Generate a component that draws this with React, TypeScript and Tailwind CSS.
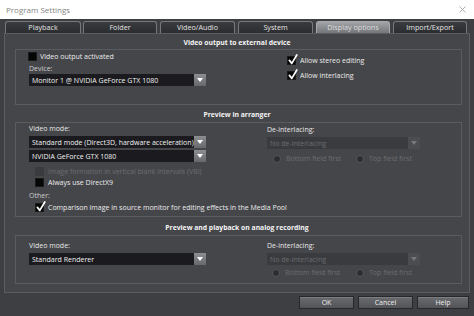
import React from "react";

function Check({ checked = false, disabled = false }: { checked?: boolean; disabled?: boolean }) {
  return (
    <div
      className={
        "relative w-[9px] h-[9px] shrink-0 border " +
        (disabled ? "bg-[#3a3b3f] border-[#3a3b3f]" : "bg-[#060606] border-[#1a1a1a]")
      }
    >
      {checked && (
        <svg className="absolute left-[0px] top-[-3px]" width="10" height="11" viewBox="0 0 10 11">
          <path d="M1.4 6.4 L3.8 9.4 L8.8 1.0" fill="none" stroke="#ffffff" strokeWidth="1.7" strokeLinecap="round" strokeLinejoin="round" />
        </svg>
      )}
    </div>
  );
}

function Arrow({ disabled = false }: { disabled?: boolean }) {
  return (
    <div
      className={
        "w-[12px] h-full flex items-center justify-center " +
        (disabled ? "bg-[#4c4d51]" : "bg-gradient-to-b from-[#8d8e92] to-[#67686c]")
      }
    >
      <svg width="6" height="4" viewBox="0 0 6 4">
        <path d="M0 0 L6 0 L3 4 Z" fill={disabled ? "#77787c" : "#ffffff"} />
      </svg>
    </div>
  );
}

function Select({ text, disabled = false, wide = false }: { text: string; disabled?: boolean; wide?: boolean }) {
  return (
    <div
      className={
        "flex items-stretch h-[12px] " +
        (wide ? "w-[153px] " : "w-[177px] ") +
        (disabled ? "bg-[#3a3b3f]" : "bg-[#1b1b1f]")
      }
    >
      <div
        className={
          "flex-1 flex items-center pl-[3px] text-[7px] leading-none whitespace-nowrap " +
          (disabled ? "text-[#6c6d71]" : "text-[#f0f0f0]")
        }
      >
        {text}
      </div>
      <Arrow disabled={disabled} />
    </div>
  );
}

function Radio({ label, w }: { label: string; w: string }) {
  return (
    <div className={"flex items-center h-[9px] gap-[5px] " + w}>
      <div className="w-[8px] h-[8px] rounded-full bg-[#2c2d30] border border-[#55565a] shrink-0" />
      <span className="text-[7px] leading-none text-[#6c6d71] whitespace-nowrap">{label}</span>
    </div>
  );
}

function Label({ children, dim = false }: { children: React.ReactNode; dim?: boolean }) {
  return (
    <div className={"h-[10px] flex items-center text-[7px] leading-none whitespace-nowrap " + (dim ? "text-[#cfcfcf]" : "text-[#e6e6e6]")}>
      {children}
    </div>
  );
}

function CheckRow({ label, checked = false, disabled = false, gap = "gap-[4px]" }: { label: string; checked?: boolean; disabled?: boolean; gap?: string }) {
  return (
    <div className={"flex items-center h-[9px] " + gap}>
      <Check checked={checked} disabled={disabled} />
      <span className={"text-[7px] leading-none whitespace-nowrap " + (disabled ? "text-[#6c6d71]" : "text-[#ececec]")}>{label}</span>
    </div>
  );
}

function Heading({ children, h, pt }: { children: React.ReactNode; h: string; pt: string }) {
  return (
    <div className={"flex justify-center " + h + " " + pt}>
      <span className="text-[6.8px] leading-[10px] font-bold text-[#f4f4f4] whitespace-nowrap">{children}</span>
    </div>
  );
}

function Tab({ label, w, ml, active = false }: { label: string; w: string; ml: string; active?: boolean }) {
  return (
    <div
      className={
        "h-[12px] rounded-t-[3px] border border-b-0 flex items-center justify-center text-[7.2px] leading-none " +
        w + " " + ml + " " +
        (active
          ? "bg-gradient-to-b from-[#a2a3a7] to-[#75767a] border-[#a8a9ad] text-[#dedede]"
          : "bg-gradient-to-b from-[#3a3b3f] to-[#2c2d30] border-[#76777b] text-[#e4e4e4]")
      }
    >
      {label}
    </div>
  );
}

function Button({ label, w }: { label: string; w: string }) {
  return (
    <div
      className={
        "h-[13px] flex items-center justify-center border border-[#27282b] bg-gradient-to-b from-[#6a6b6f] to-[#535458] shadow-[inset_0_1px_0_#7c7d81] text-[7px] leading-none text-[#ececec] " +
        w
      }
    >
      {label}
    </div>
  );
}

export default function App() {
  return (
    <div className="w-[474px] h-[316px] overflow-hidden font-['Open_Sans','Noto_Sans',sans-serif] bg-[#3e3f43]">
      {/* title bar */}
      <div className="h-[19px] bg-white flex items-center justify-between pl-[6px] pr-[8px]">
        <span className="text-[8px] leading-none text-[#858585]">Program Settings</span>
        <svg width="7" height="7" viewBox="0 0 7 7">
          <path d="M0.5 0.5 L6.5 6.5 M6.5 0.5 L0.5 6.5" stroke="#9a9a9a" strokeWidth="0.8" />
        </svg>
      </div>

      {/* tabs */}
      <div className="flex mt-[2px] h-[12px]">
        <Tab label="Playback" w="w-[76px]" ml="ml-[5px]" />
        <Tab label="Folder" w="w-[74px]" ml="ml-[2px]" />
        <Tab label="Video/Audio" w="w-[75px]" ml="ml-[3px]" />
        <Tab label="System" w="w-[75px]" ml="ml-[3px]" />
        <Tab label="Display options" w="w-[74px]" ml="ml-[3px]" active />
        <Tab label="Import/Export" w="w-[74px]" ml="ml-[3px]" />
      </div>

      {/* panel */}
      <div className="ml-[4px] w-[466px] h-[260px] border border-[#5b5c60] bg-[#45464a] flex flex-col">
        <Heading h="h-[15px]" pt="pt-[4px]">Video output to external device</Heading>

        {/* group 1 */}
        <div className="ml-[10px] w-[447px] h-[56px] border border-[#5a5b5f] flex shrink-0">
          <div className="w-[271px] pl-[12px] flex flex-col">
            <div className="mt-[2px]">
              <CheckRow label="Video output activated" gap="gap-[3px]" />
            </div>
            <div className="mt-[2px] pl-[1px]">
              <Label dim>Device:</Label>
            </div>
            <div className="mt-[1px] pl-[1px]">
              <Select text="Monitor 1 @ NVIDIA GeForce GTX 1080" />
            </div>
          </div>
          <div className="flex flex-col">
            <div className="mt-[6px]">
              <CheckRow label="Allow stereo editing" checked />
            </div>
            <div className="mt-[6px]">
              <CheckRow label="Allow interlacing" checked />
            </div>
          </div>
        </div>

        <Heading h="h-[17px]" pt="pt-[5px]">Preview in arranger</Heading>

        {/* group 2 */}
        <div className="ml-[10px] w-[447px] h-[95px] border border-[#5a5b5f] flex shrink-0">
          <div className="w-[251px] pl-[13px] flex flex-col">
            <Label>Video mode:</Label>
            <div className="mt-[3px]">
              <Select text="Standard mode (Direct3D, hardware acceleration)" />
            </div>
            <div className="mt-[2px]">
              <Select text="NVIDIA GeForce GTX 1080" />
            </div>
            <div className="mt-[5px] pl-[6px]">
              <CheckRow label="Image formation in vertical blank intervals (VBI)" disabled />
            </div>
            <div className="mt-[2px] pl-[6px]">
              <CheckRow label="Always use DirectX9" />
            </div>
            <div className="mt-[3px]">
              <Label dim>Other:</Label>
            </div>
            <div className="mt-[3px] pl-[6px]">
              <CheckRow label="Comparison image in source monitor for editing effects in the Media Pool" checked />
            </div>
          </div>
          <div className="flex flex-col">
            <div className="mt-[1px]">
              <Label>De-interlacing:</Label>
            </div>
            <div className="mt-[3px]">
              <Select text="No de-interlacing" disabled wide />
            </div>
            <div className="mt-[5px] pl-[6px] flex">
              <Radio label="Bottom field first" w="w-[83px]" />
              <Radio label="Top field first" w="w-[70px]" />
            </div>
          </div>
        </div>

        <Heading h="h-[18px]" pt="pt-[6px]">Preview and playback on analog recording</Heading>

        {/* group 3 */}
        <div className="ml-[10px] w-[447px] h-[49px] border border-[#5a5b5f] flex shrink-0">
          <div className="w-[251px] pl-[13px] flex flex-col">
            <div className="mt-[4px]">
              <Label>Video mode:</Label>
            </div>
            <div className="mt-[3px]">
              <Select text="Standard Renderer" />
            </div>
          </div>
          <div className="flex flex-col">
            <div className="mt-[4px]">
              <Label>De-interlacing:</Label>
            </div>
            <div className="mt-[3px]">
              <Select text="No de-interlacing" disabled wide />
            </div>
            <div className="mt-[3px] pl-[5px] flex">
              <Radio label="Bottom field first" w="w-[84px]" />
              <Radio label="Top field first" w="w-[70px]" />
            </div>
          </div>
        </div>
      </div>

      {/* buttons */}
      <div className="flex mt-[3px] pl-[299px] gap-[4px]">
        <Button label="OK" w="w-[55px]" />
        <Button label="Cancel" w="w-[55px]" />
        <Button label="Help" w="w-[52px]" />
      </div>
    </div>
  );
}
